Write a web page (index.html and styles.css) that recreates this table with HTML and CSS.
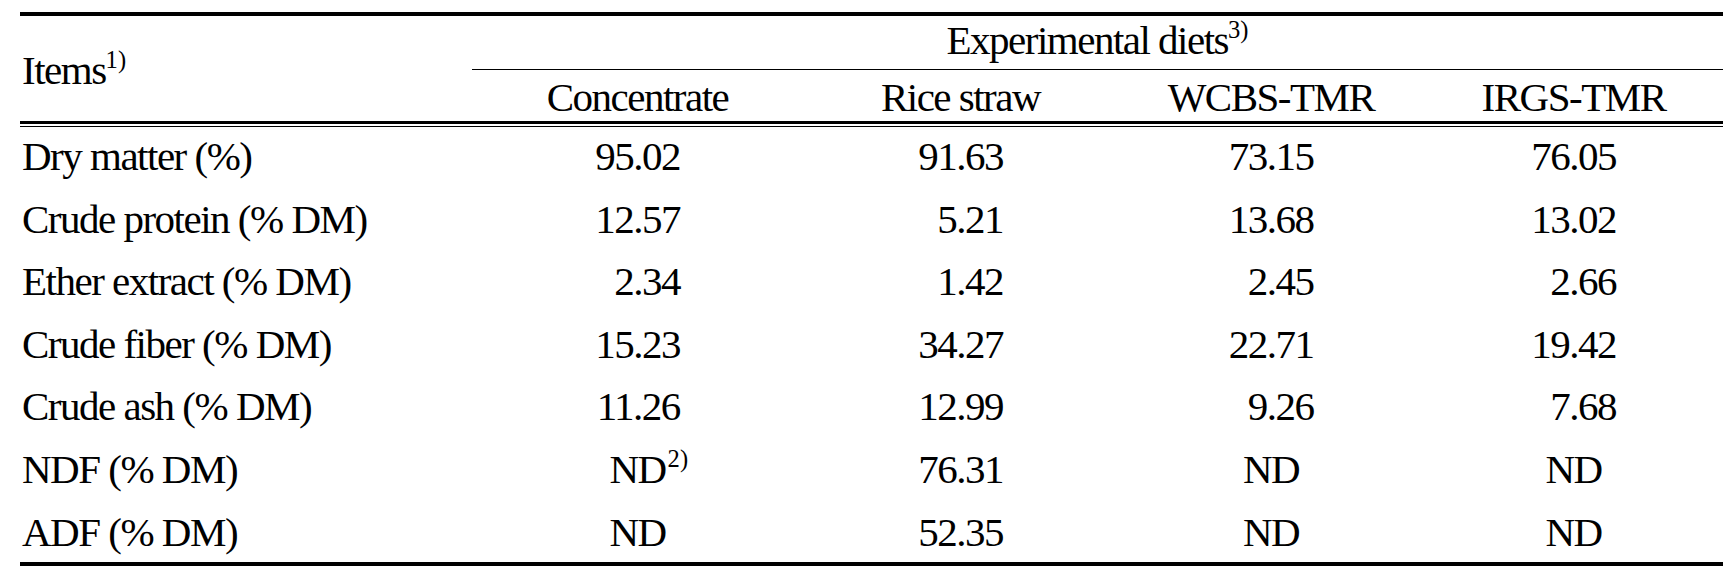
FILE: index.html
```html
<!DOCTYPE html>
<html lang="en">
<head>
<meta charset="utf-8">
<title>Chemical composition of experimental diets</title>
<link rel="stylesheet" href="styles.css">
</head>
<body>
<table class="diet-table">
  <colgroup>
    <col class="col-item">
    <col class="col-conc">
    <col class="col-rice">
    <col class="col-wcbs">
    <col class="col-irgs">
  </colgroup>
  <thead>
    <tr class="head-top">
      <th rowspan="2" class="item-head">Items<sup class="fn">1)</sup></th>
      <th colspan="4" class="group-head">Experimental diets<sup class="fn">3)</sup></th>
    </tr>
    <tr class="head-sub">
      <th>Concentrate</th>
      <th>Rice straw</th>
      <th>WCBS-TMR</th>
      <th>IRGS-TMR</th>
    </tr>
  </thead>
  <tbody>
    <tr>
      <td class="label">Dry matter (%)</td>
      <td><span class="n">95.02</span></td>
      <td><span class="n">91.63</span></td>
      <td><span class="n">73.15</span></td>
      <td><span class="n">76.05</span></td>
    </tr>
    <tr>
      <td class="label">Crude protein (% DM)</td>
      <td><span class="n">12.57</span></td>
      <td><span class="n">5.21</span></td>
      <td><span class="n">13.68</span></td>
      <td><span class="n">13.02</span></td>
    </tr>
    <tr>
      <td class="label">Ether extract (% DM)</td>
      <td><span class="n">2.34</span></td>
      <td><span class="n">1.42</span></td>
      <td><span class="n">2.45</span></td>
      <td><span class="n">2.66</span></td>
    </tr>
    <tr>
      <td class="label">Crude fiber (% DM)</td>
      <td><span class="n">15.23</span></td>
      <td><span class="n">34.27</span></td>
      <td><span class="n">22.71</span></td>
      <td><span class="n">19.42</span></td>
    </tr>
    <tr>
      <td class="label">Crude ash (% DM)</td>
      <td><span class="n">11.26</span></td>
      <td><span class="n">12.99</span></td>
      <td><span class="n">9.26</span></td>
      <td><span class="n">7.68</span></td>
    </tr>
    <tr>
      <td class="label">NDF (% DM)</td>
      <td>ND<sup class="fn fn-hang">2)</sup></td>
      <td><span class="n">76.31</span></td>
      <td>ND</td>
      <td>ND</td>
    </tr>
    <tr>
      <td class="label">ADF (% DM)</td>
      <td>ND</td>
      <td><span class="n">52.35</span></td>
      <td>ND</td>
      <td>ND</td>
    </tr>
  </tbody>
</table>
</body>
</html>
```

FILE: styles.css
```css
html, body {
  margin: 0;
  background: #ffffff;
}

body {
  color: #000000;
  font-family: "Liberation Serif", "DejaVu Serif", serif;
}

.diet-table {
  margin: 12px 0 0 20px;
  width: 1703px;
  table-layout: fixed;
  border-collapse: separate;
  border-spacing: 0;
  font-size: 41px;
  line-height: 44px;
  letter-spacing: -1.5px;
}

.col-item { width: 452px; }
.col-conc { width: 331px; }
.col-rice { width: 315px; }
.col-wcbs { width: 306px; }
.col-irgs { width: 299px; }

.diet-table th,
.diet-table td {
  padding: 0;
  font-weight: normal;
  white-space: nowrap;
  text-align: center;
}

/* header rows */
.head-top th {
  border-top: 4px solid #000;
  padding-top: 2px;
  padding-bottom: 7px;
}

.group-head {
  border-bottom: 1px solid #000;
}

.head-top .item-head {
  text-align: left;
  vertical-align: middle;
  padding: 5px 0 3px 2px;
  border-bottom: 3px solid #000;
}

.head-sub th {
  padding-top: 5px;
  padding-bottom: 2px;
  border-bottom: 3px solid #000;
}

/* body rows */
.diet-table tbody td {
  padding-top: 10px;
  padding-bottom: 8.6px;
}

.diet-table tbody td.label {
  text-align: left;
  padding-left: 2px;
}

/* thin second line of the double rule under the header */
.diet-table tbody tr:first-child td {
  background: linear-gradient(#000, #000) 0 2px / 100% 1px no-repeat;
}

.diet-table tbody tr:last-child td {
  border-bottom: 4px solid #000;
}

/* numbers right-aligned on a common edge, block centred in the column */
.n {
  display: inline-block;
  width: calc(2.25em - 7.5px);
  text-align: right;
}

/* footnote markers */
.fn {
  font-size: 0.6em;
  line-height: 0;
  letter-spacing: 0;
  vertical-align: 0.65em;
}

/* marker hangs to the right so the value itself stays centred */
.fn-hang {
  margin-left: 2px;
  margin-right: -22.5px;
}
```
